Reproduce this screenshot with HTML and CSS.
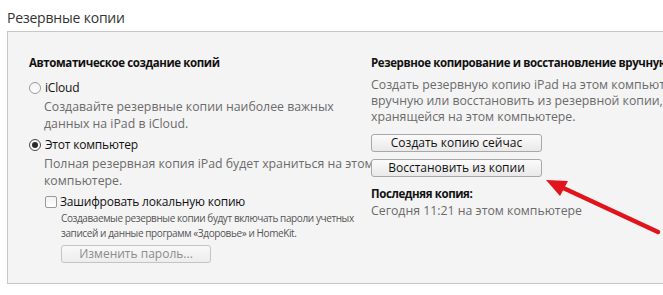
FILE: index.html
```html
<!DOCTYPE html>
<html lang="ru">
<head>
    <meta charset="UTF-8">
    <title>Резервные копии</title>
    <link rel="stylesheet" href="styles.css">
</head>
<body>
    <h1 class="title">Резервные копии</h1>

    <div class="panel">
        <div class="col left">
            <h2>Автоматическое создание копий</h2>

            <label class="opt">
                <span class="radio"></span>
                <span class="opt-name">iCloud</span>
            </label>
            <p class="desc">Создавайте резервные копии наиболее важных<br>данных на iPad в iCloud.</p>

            <label class="opt">
                <span class="radio on"></span>
                <span class="opt-name">Этот компьютер</span>
            </label>
            <p class="desc">Полная резервная копия iPad будет храниться на этом<br>компьютере.</p>

            <div class="sub">
                <label class="opt">
                    <span class="check"></span>
                    <span class="opt-name">Зашифровать локальную копию</span>
                </label>
                <p class="small">Создаваемые резервные копии будут включать пароли учетных<br>записей и данные программ «Здоровье» и HomeKit.</p>
                <button class="btn disabled">Изменить пароль...</button>
            </div>
        </div>

        <div class="col right">
            <h2>Резервное копирование и восстановление вручную</h2>
            <p class="desc">Создать резервную копию iPad на этом компьютере<br>вручную или восстановить из резервной копии,<br>хранящейся на этом компьютере.</p>
            <button class="btn">Создать копию сейчас</button>
            <div class="restore">
                <button class="btn">Восстановить из копии</button>
                <svg class="arrow" width="120" height="64" viewBox="0 0 120 64">
                    <line x1="115" y1="59" x2="16" y2="13" stroke="#e2141b" stroke-width="4.5" stroke-linecap="round"/>
                    <polygon points="3,7 17,23 25,8" fill="#e2141b"/>
                </svg>
            </div>
            <h3>Последняя копия:</h3>
            <p class="desc">Сегодня 11:21 на этом компьютере</p>
        </div>
    </div>
</body>
</html>
```

FILE: styles.css
```css
* {
    margin: 0;
    box-sizing: border-box;
}

body {
    margin: 0;
    width: 663px;
    height: 295px;
    overflow: hidden;
    background: #ffffff;
    font-family: "Open Sans", "Noto Sans", sans-serif;
    color: #1a1a1a;
}

.title {
    font-size: 14px;
    font-weight: 400;
    letter-spacing: -0.2px;
    color: #333;
    padding: 8px 0 0 7px;
    line-height: 20px;
}

.panel {
    margin: 3px 0 0 7px;
    width: 680px;
    height: 253px;
    background: #f4f4f4;
    border: 1px solid #c8c8c8;
    border-right: none;
    display: flex;
    padding: 22px 0 0 21px;
}

.col.left {
    width: 342px;
}

.col.right {
    flex: 1;
    overflow: hidden;
}

h2, h3 {
    font-size: 11.5px;
    font-weight: 700;
    letter-spacing: -0.4px;
    line-height: 17px;
    color: #111;
    white-space: nowrap;
}

h2 {
    margin-bottom: 6px;
}

.left h2 {
    margin-bottom: 8px;
}

h3 {
    margin-top: 8px;
}

.opt {
    display: flex;
    align-items: center;
    gap: 4px;
    font-size: 12px;
    letter-spacing: -0.2px;
    line-height: 17px;
    color: #111;
    white-space: nowrap;
}

.radio {
    width: 12px;
    height: 12px;
    border-radius: 50%;
    border: 1px solid #9a9a9a;
    background: linear-gradient(#f2f2f2, #ffffff);
    position: relative;
}

.radio.on {
    border-color: #4b4b4b;
}

.radio.on::after {
    content: "";
    position: absolute;
    left: 2px;
    top: 2px;
    width: 6px;
    height: 6px;
    border-radius: 50%;
    background: #2a2a2a;
}

.check {
    width: 12px;
    height: 12px;
    border: 1px solid #9a9a9a;
    border-radius: 2px;
    background: linear-gradient(#f2f2f2, #ffffff);
}

.desc {
    font-size: 12.3px;
    line-height: 16.5px;
    color: #6b6b6b;
    padding-left: 15px;
    margin: 3px 0 4px;
    white-space: nowrap;
}

.right .desc {
    padding-left: 0;
    line-height: 16px;
    margin: 1px 0 9px;
}

.sub {
    padding-left: 16px;
}

.sub .opt {
    gap: 3px;
}

.small {
    font-size: 10px;
    line-height: 15px;
    letter-spacing: -0.4px;
    color: #555;
    padding-left: 16px;
    margin-top: 1px;
    white-space: nowrap;
}

.btn {
    display: block;
    width: 171px;
    height: 18px;
    font-family: inherit;
    font-size: 12px;
    line-height: 16px;
    color: #111;
    background: linear-gradient(#fbfbfb, #e9e9e9);
    border: 1px solid #a8a8a8;
    border-radius: 3px;
    padding: 0;
    margin-bottom: 7px;
}

.btn.disabled {
    width: 150px;
    margin: 4px 0 0 16px;
    color: #8c8c8c;
    border-color: #c4c4c4;
    background: linear-gradient(#f8f8f8, #ededed);
}

.restore {
    position: relative;
}

.arrow {
    position: absolute;
    left: 172px;
    top: 14px;
}
```
